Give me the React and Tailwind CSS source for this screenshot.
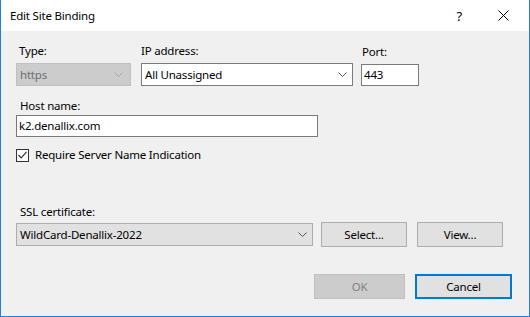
import React from "react";

const Chevron = ({ color = "#000" }) => (
  <svg width="9" height="5" viewBox="0 0 9 5" className="shrink-0">
    <path d="M0.5 0.5 L4.5 4.5 L8.5 0.5" fill="none" stroke={color} strokeWidth="1" />
  </svg>
);

export default function App() {
  return (
    <div
      className="w-[530px] h-[317px] flex flex-col bg-[#f0f0f0] border-l border-r border-b border-[#2b7bd8] text-[11.5px] tracking-[-0.2px] text-black overflow-hidden"
      style={{ fontFamily: '"Noto Sans", "Liberation Sans", sans-serif' }}
    >
      {/* Title bar */}
      <div className="h-[31px] shrink-0 bg-white flex items-center pl-[9px] pr-[20px]">
        <span className="flex-1 leading-[16px]">Edit Site Binding</span>
        <span className="text-[13px] leading-[16px] mr-[36px]">?</span>
        <svg width="11" height="11" viewBox="0 0 11 11">
          <path d="M0.5 0.5 L10.5 10.5 M10.5 0.5 L0.5 10.5" stroke="#000" strokeWidth="1" />
        </svg>
      </div>

      {/* Body */}
      <div className="flex-1 flex flex-col pl-[15px] pr-[16px] pt-[12px]">
        {/* Row 1 */}
        <div className="flex items-end">
          <div className="flex flex-col w-[115px]">
            <span className="leading-[16px] pl-[3px] mb-[4px]">Type:</span>
            <div className="h-[23px] bg-[#cccccc] border border-[#bfbfbf] flex items-center pl-[3px] pr-[7px] text-[#6d6d6d]">
              <span className="flex-1">https</span>
              <Chevron color="#a8a8a8" />
            </div>
          </div>
          <div className="flex flex-col w-[212px] ml-[10px]">
            <span className="leading-[16px] mb-[4px]">IP address:</span>
            <div className="h-[23px] bg-white border border-[#7a7a7a] flex items-center pl-[3px] pr-[5px]">
              <span className="flex-1">All Unassigned</span>
              <Chevron color="#555" />
            </div>
          </div>
          <div className="flex flex-col w-[58px] ml-[8px]">
            <span className="leading-[16px] pl-[1px] mb-[4px]">Port:</span>
            <div className="h-[22px] bg-white border border-[#7a7a7a] flex items-center pl-[2px]">
              <span>443</span>
            </div>
          </div>
        </div>

        {/* Host name */}
        <div className="flex flex-col mt-[12px] w-[302px]">
          <span className="leading-[16px] pl-[4px] mb-[1px]">Host name:</span>
          <div className="h-[22px] bg-white border border-[#7a7a7a] flex items-center pl-[2px]">
            <span>k2.denallix.com</span>
          </div>
        </div>

        {/* Checkbox */}
        <div className="flex items-center mt-[10px]">
          <div className="w-[13px] h-[13px] border border-[#333333] bg-white flex items-center justify-center">
            <svg width="9" height="8" viewBox="0 0 9 8">
              <path d="M0.5 4 L3.2 6.8 L8.5 0.8" fill="none" stroke="#333" strokeWidth="1.2" />
            </svg>
          </div>
          <span className="ml-[6px] leading-[16px]">Require Server Name Indication</span>
        </div>

        {/* SSL certificate */}
        <div className="flex flex-col mt-[41px]">
          <span className="leading-[16px] pl-[4px] mb-[2px]">SSL certificate:</span>
          <div className="flex items-center">
            <div className="w-[297px] h-[23px] bg-[#e1e1e1] border border-[#adadad] flex items-center pl-[3px] pr-[5px]">
              <span className="flex-1">WildCard-Denallix-2022</span>
              <Chevron color="#555" />
            </div>
            <button className="ml-[8px] w-[86px] h-[25px] bg-[#e1e1e1] border border-[#adadad] flex items-center justify-center">
              Select...
            </button>
            <button className="ml-[10px] w-[86px] h-[25px] bg-[#e1e1e1] border border-[#adadad] flex items-center justify-center">
              View...
            </button>
          </div>
        </div>

        {/* Bottom buttons */}
        <div className="flex justify-end mt-[27px] pr-[1px]">
          <button className="w-[91px] h-[25px] bg-[#cccccc] border border-[#bfbfbf] text-[#838383] flex items-center justify-center">
            OK
          </button>
          <button className="ml-[10px] w-[97px] h-[25px] bg-[#e1e1e1] border-2 border-[#0078d7] flex items-center justify-center">
            Cancel
          </button>
        </div>
      </div>
    </div>
  );
}
